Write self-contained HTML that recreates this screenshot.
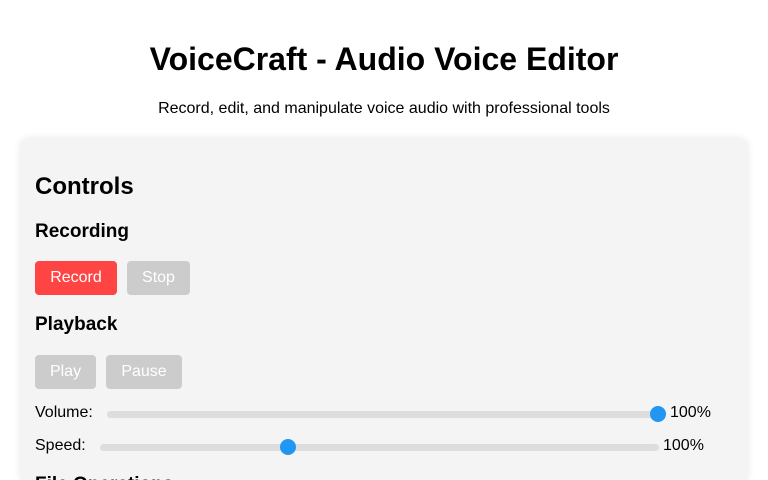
<!DOCTYPE html>
<html style="width:768px;height:480px;overflow:hidden"><head><style>
body{margin:0;width:768px;height:480px;overflow:hidden;background:#fff;font-family:"Liberation Sans",Arial,sans-serif;position:relative;color:#000}
.a{position:absolute;white-space:nowrap}
h1{position:absolute;margin:0;left:0;width:768px;text-align:center;top:39px;font-size:32px;line-height:40px;font-weight:bold}
.sub{left:0;width:768px;text-align:center;top:99px;font-size:16px;line-height:20px}
.panel{position:absolute;left:20px;top:138px;width:728px;height:342px;background:#f4f4f4;border-radius:8px 8px 0 0;box-shadow:0 0 8px rgba(0,0,0,0.08);overflow:hidden}
.h2{font-size:24px;font-weight:bold;line-height:28px}
.h3{font-size:19px;font-weight:bold;line-height:22px}
.btn{position:absolute;height:34px;line-height:34px;border-radius:4px;color:#fff;font-size:16px;text-align:center;background:#ccc}
.track{position:absolute;height:7px;border-radius:4px;background:#ddd}
.thumb{position:absolute;width:16px;height:16px;border-radius:50%;background:#2196f3}
.t{font-size:16px;line-height:20px}
</style></head><body>
<h1>VoiceCraft - Audio Voice Editor</h1>
<div class="a sub">Record, edit, and manipulate voice audio with professional tools</div>
<div class="panel"><div class="a h3" style="left:15px;top:336px">File Operations</div></div>
<div class="a h2" style="left:35px;top:173px">Controls</div>
<div class="a h3" style="left:35px;top:221px">Recording</div>
<div class="btn" style="left:35px;top:261px;width:82px;background:#ff4444">Record</div>
<div class="btn" style="left:127px;top:261px;width:63px">Stop</div>
<div class="a h3" style="left:35px;top:314px">Playback</div>
<div class="btn" style="left:35px;top:355px;width:61px">Play</div>
<div class="btn" style="left:106px;top:355px;width:76px">Pause</div>
<div class="a t" style="left:35px;top:403px">Volume:</div>
<div class="track" style="left:107px;top:411px;width:558px"></div>
<div class="thumb" style="left:650px;top:406px"></div>
<div class="a t" style="left:670px;top:403px">100%</div>
<div class="a t" style="left:35px;top:436px">Speed:</div>
<div class="track" style="left:100px;top:444px;width:559px"></div>
<div class="thumb" style="left:280px;top:439px"></div>
<div class="a t" style="left:663px;top:436px">100%</div>
</body></html>
